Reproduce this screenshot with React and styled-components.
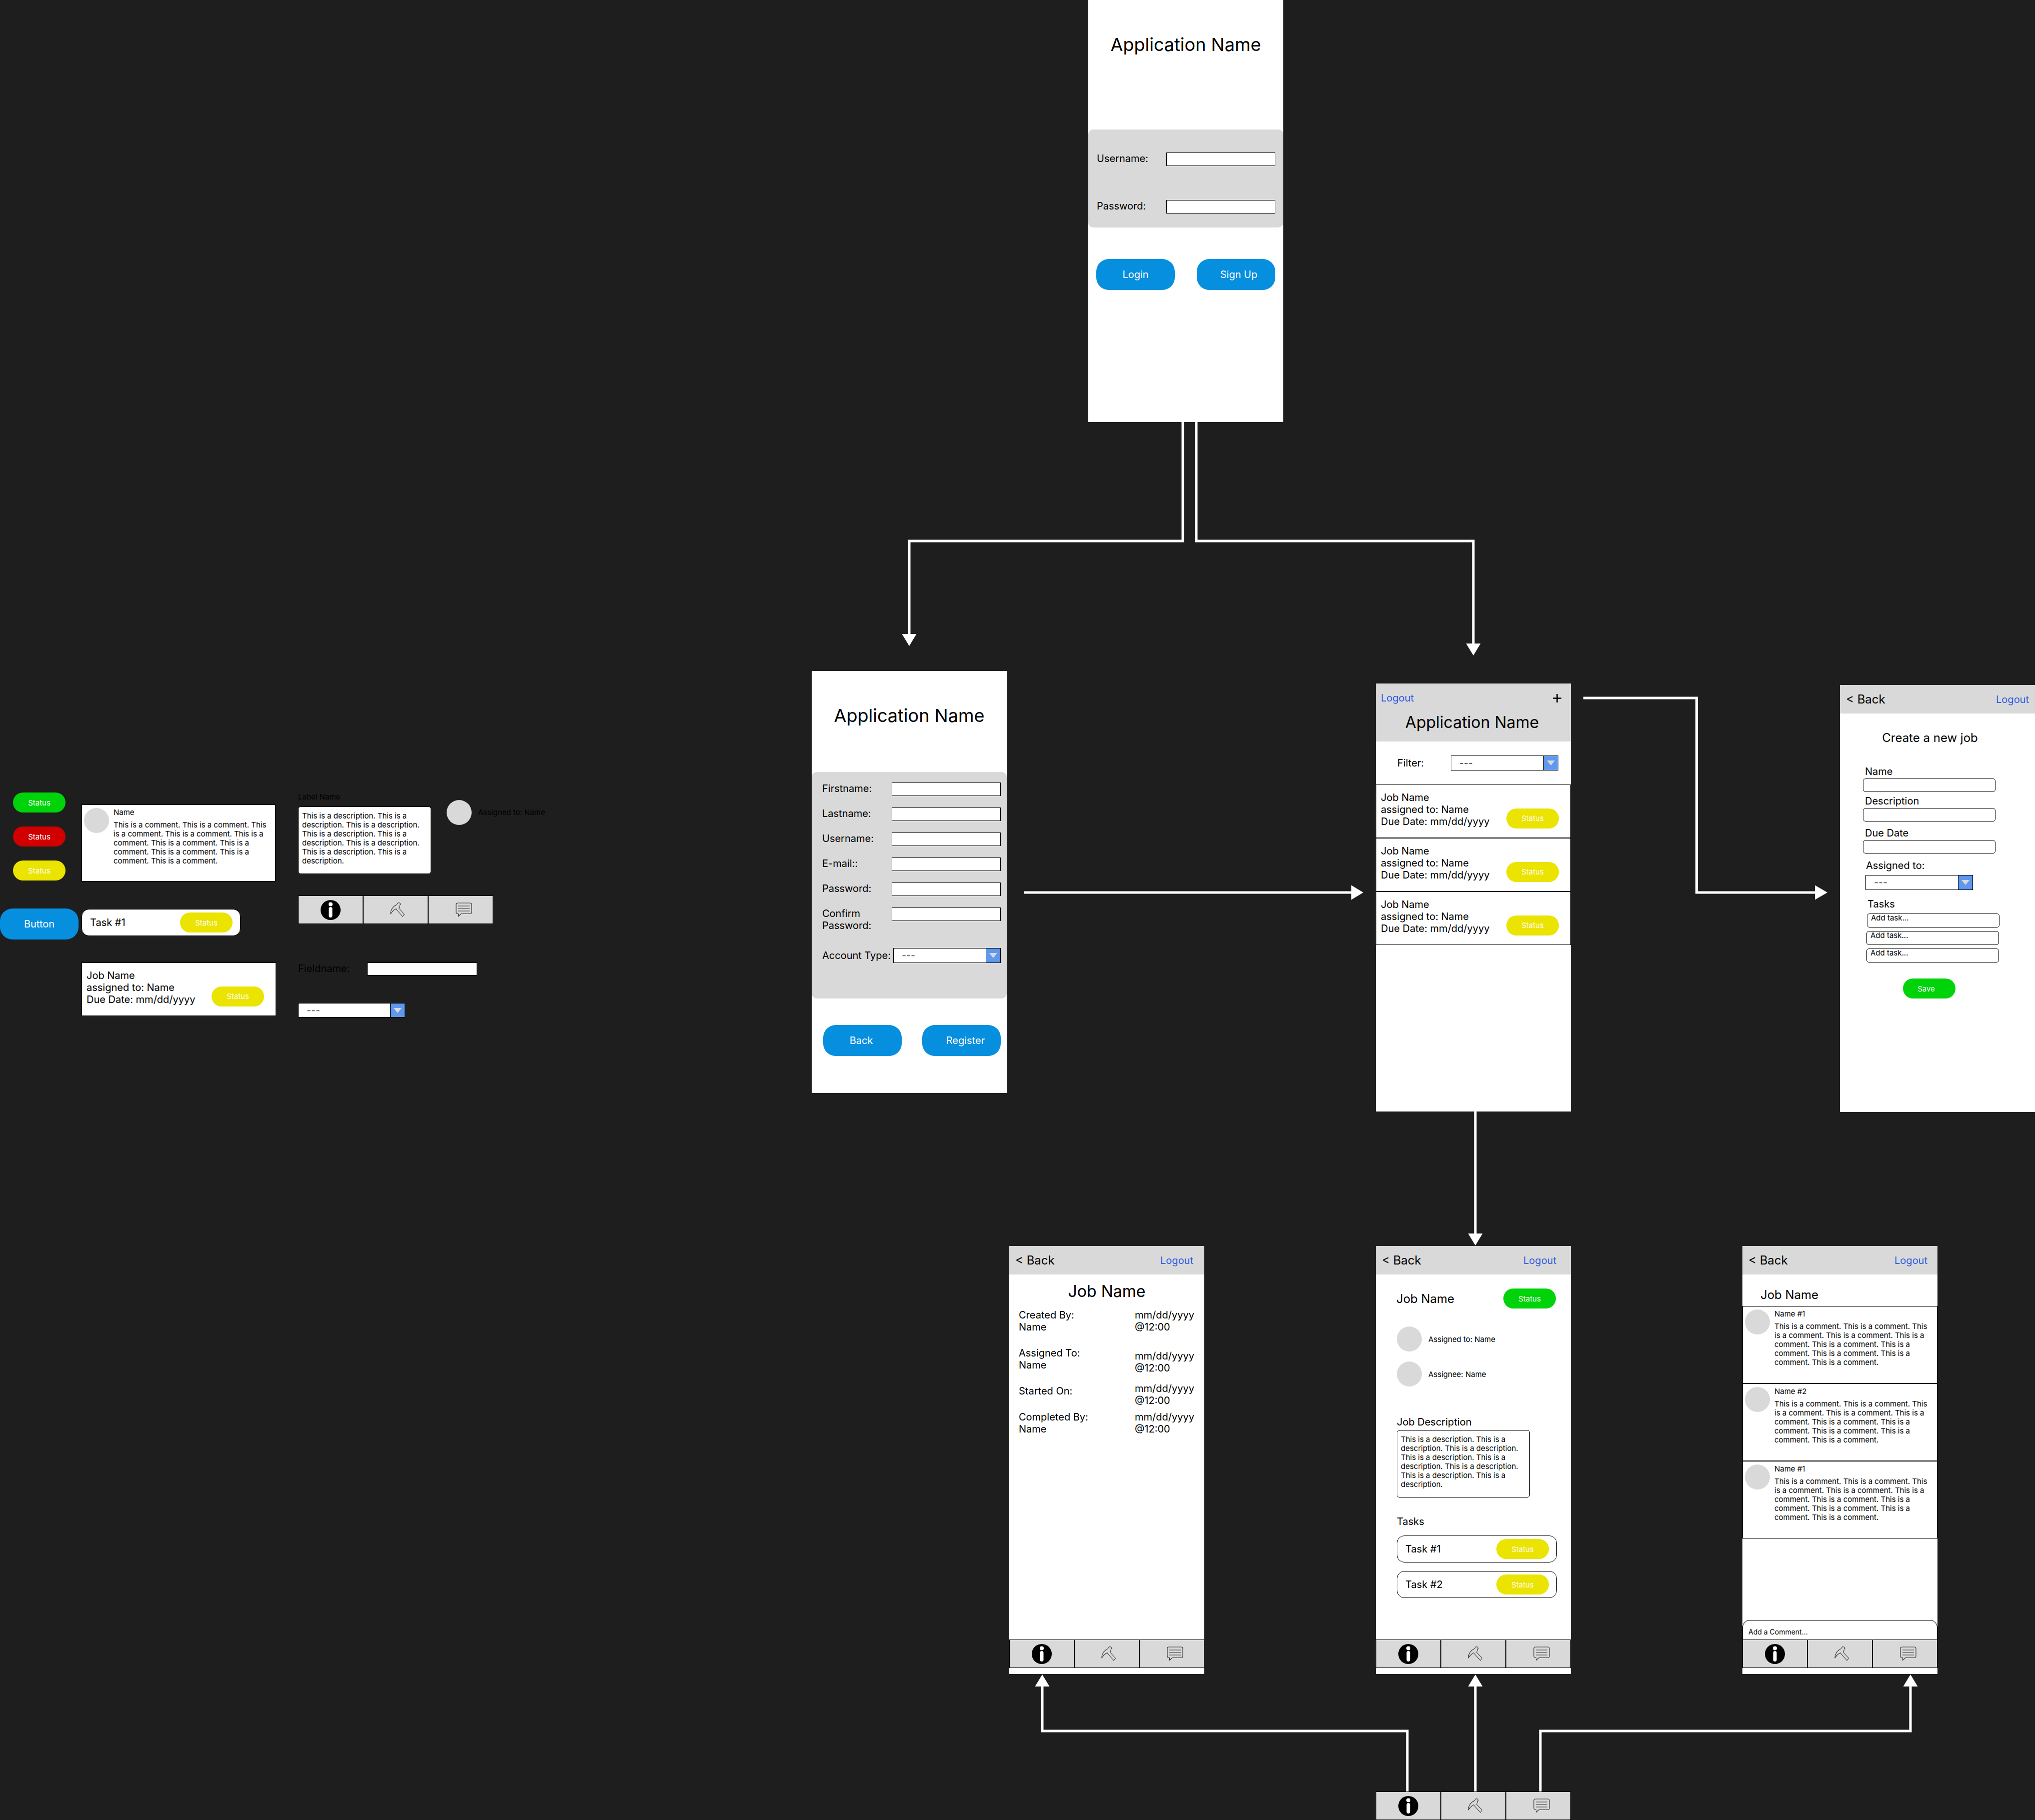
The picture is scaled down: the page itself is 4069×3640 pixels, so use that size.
import React from "react"
import styled, { createGlobalStyle } from "styled-components"

const GlobalStyle = createGlobalStyle`
  html, body {
    margin: 0;
    background: #1e1e1e;
  }
  body {
    font-family: "Inter", "Liberation Sans", sans-serif;
    color: #000;
  }
`

const GREEN = "#00d30a"
const RED = "#d00000"
const YELLOW = "#ebe300"
const BLUE = "#068fdf"
const GREY = "#d9d9d9"
const LINK = "#2d5be3"

const COMMENT =
  "This is a comment. This is a comment. This is a comment. This is a comment. This is a comment. This is a comment. This is a comment. This is a comment. This is a comment. This is a comment."
const DESCRIPTION =
  "This is a description. This is a description. This is a description. This is a description. This is a description. This is a description. This is a description. This is a description."

const Canvas = styled.div`
  position: relative;
  width: 4069px;
  height: 3640px;
  overflow: hidden;
  background: #1e1e1e;
`
const Frame = styled.section`
  position: absolute;
  left: ${(p) => p.$x}px;
  top: ${(p) => p.$y}px;
  width: 390px;
  height: ${(p) => p.$h}px;
  display: flex;
  flex-direction: column;
  background: #fff;
`
const Spot = styled.div`
  position: absolute;
  left: ${(p) => p.$x}px;
  top: ${(p) => p.$y}px;
`
const Wires = styled.svg`
  position: absolute;
  left: 0;
  top: 0;
  pointer-events: none;
`
const Spacer = styled.div`
  flex: 1;
`

/* shared parts */
const Pill = styled.div`
  flex: none;
  width: 105px;
  height: 40px;
  margin-top: ${(p) => p.$mt || 0}px;
  box-sizing: border-box;
  padding-right: ${(p) => p.$pr || 0}px;
  display: flex;
  align-items: center;
  justify-content: center;
  border-radius: 20px;
  background: ${(p) => p.$color};
  color: #fff;
  font-size: 15px;
`
const PillStack = styled.div`
  display: flex;
  flex-direction: column;
  gap: 28px;
`
const BigButton = styled.div`
  width: 157px;
  height: 62px;
  display: flex;
  align-items: center;
  justify-content: center;
  box-sizing: border-box;
  padding-left: ${(p) => p.$pad || 0}px;
  padding-right: ${(p) => p.$padR || 0}px;
  border-radius: 25px;
  background: ${BLUE};
  color: #fff;
  font-size: 20px;
`
const ButtonRow = styled.div`
  display: flex;
  justify-content: space-between;
  margin-top: ${(p) => p.$mt}px;
  padding: 0 ${(p) => p.$r}px 0 ${(p) => p.$l}px;
`
const AppTitle = styled.h1`
  margin: 0;
  height: 178px;
  display: flex;
  align-items: center;
  justify-content: center;
  font-size: 36px;
  font-weight: 400;
`
const GreyPanel = styled.div`
  height: ${(p) => p.$h}px;
  box-sizing: border-box;
  margin-top: ${(p) => p.$mt}px;
  padding: ${(p) => p.$pt}px ${(p) => p.$pr}px 0 ${(p) => p.$pl}px;
  border-radius: 10px;
  background: ${GREY};
`
const FormRow = styled.div`
  display: flex;
  justify-content: space-between;
  align-items: ${(p) => (p.$center ? "center" : "flex-start")};
  height: ${(p) => p.$h || 27}px;
  margin-top: ${(p) => p.$mt || 0}px;
  margin-bottom: ${(p) => p.$mb || 0}px;
`
const RowLabel = styled.div`
  width: 140px;
  font-size: 20px;
  line-height: 24px;
`
const Field = styled.div`
  width: 220px;
  height: ${(p) => p.$h || 27}px;
  box-sizing: border-box;
  border: 1px solid #000;
  background: #fff;
`
const Select = styled.div`
  flex: none;
  display: flex;
  width: ${(p) => p.$w || 215}px;
  height: ${(p) => p.$h || 30}px;
  margin-left: ${(p) => p.$ml || 0}px;
  box-sizing: border-box;
  border: 1px solid #000;
  background: #fff;
`
const SelectValue = styled.div`
  flex: 1;
  display: flex;
  align-items: center;
  padding-left: 16px;
  font-size: 20px;
  font-weight: 300;
`
const SelectArrow = styled.div`
  flex: none;
  width: 28px;
  display: flex;
  align-items: center;
  justify-content: center;
  border-left: 1px solid #000;
  background: #5f98ed;
  &::after {
    content: "";
    border-left: 8px solid transparent;
    border-right: 8px solid transparent;
    border-top: 10px solid ${GREY};
  }
`
const Dropdown = ({ w, h, ml }) => (
  <Select $w={w} $h={h} $ml={ml}>
    <SelectValue>---</SelectValue>
    <SelectArrow />
  </Select>
)
const TopBar = styled.header`
  flex: none;
  height: 57px;
  box-sizing: border-box;
  display: flex;
  align-items: center;
  justify-content: space-between;
  padding: 0 ${(p) => p.$r}px 0 12px;
  background: ${GREY};
`
const BackLink = styled.span`
  font-size: 24px;
`
const Logout = styled.span`
  color: ${LINK};
  font-size: 20px;
`
const Avatar = styled.div`
  flex: none;
  width: 50px;
  height: 50px;
  border-radius: 50%;
  background: ${GREY};
`
const CommentBox = styled.div`
  flex: none;
  width: ${(p) => p.$w || 390}px;
  height: ${(p) => p.$h || 155}px;
  box-sizing: border-box;
  display: flex;
  gap: 9px;
  padding: 6px 4px 0;
  border: 1px solid #000;
  background: #fff;
`
const CommentBody = styled.div`
  width: 312px;
  font-size: 15px;
  line-height: 18px;
`
const CommentText = styled.p`
  margin: 7px 0 0;
`
const Comment = ({ name, w, h }) => (
  <CommentBox $w={w} $h={h}>
    <Avatar />
    <CommentBody>
      {name}
      <CommentText>{COMMENT}</CommentText>
    </CommentBody>
  </CommentBox>
)
const DescriptionBox = styled.div`
  width: 266px;
  height: 135px;
  box-sizing: border-box;
  padding: 9px 7px 0;
  border: 1px solid #000;
  border-radius: 5px;
  background: #fff;
  font-size: 15px;
  line-height: 18px;
`
const TaskBox = styled.div`
  width: ${(p) => p.$w}px;
  height: 54px;
  box-sizing: border-box;
  display: flex;
  align-items: center;
  justify-content: space-between;
  padding: 0 15px 0 16px;
  border: 1px solid #000;
  border-radius: 15px;
  background: #fff;
  font-size: 20px;
`
const JobBox = styled.div`
  flex: none;
  width: ${(p) => p.$w || 390}px;
  height: ${(p) => p.$h || 107}px;
  box-sizing: border-box;
  display: flex;
  justify-content: space-between;
  padding: 13px 23px 0 9px;
  border: 1px solid #000;
  background: #fff;
  font-size: 20px;
  line-height: 24px;
`
const Job = ({ w, h }) => (
  <JobBox $w={w} $h={h}>
    <div>
      Job Name
      <br />
      assigned to: Name
      <br />
      Due Date: mm/dd/yyyy
    </div>
    <Pill $color={YELLOW} $mt={34}>
      Status
    </Pill>
  </JobBox>
)

/* bottom tabs */
const TabBar = styled.nav`
  flex: none;
  display: grid;
  grid-template-columns: repeat(3, 130px);
  height: 57px;
  margin-bottom: ${(p) => p.$mb || 0}px;
`
const Tab = styled.div`
  display: flex;
  align-items: center;
  justify-content: center;
  box-sizing: border-box;
  padding-left: ${(p) => p.$pad || 0}px;
  border: 1px solid #000;
  background: ${GREY};
`
const InfoIcon = () => (
  <svg width="40" height="40" viewBox="0 0 40 40">
    <circle cx="20" cy="20" r="20" fill="#000" />
    <circle cx="20" cy="8.5" r="4" fill="#fff" />
    <rect x="16.5" y="14" width="7" height="21" rx="3.5" fill="#fff" />
  </svg>
)
const HammerIcon = () => (
  <svg width="30" height="31" viewBox="0 0 30 31">
    <path
      d="M1 24 C0.5 16 6 8.5 13 5.5 L16 1.5 L19.5 2 L21 4.5 L19.5 6 L19 9 L17.5 12.5 L28.5 24.5 L25 29 L13.5 16 L12 13.5 L8.5 15.5 C5.5 17.5 3 20.5 1 24 Z"
      fill="none"
      stroke="#333"
      strokeWidth="1.1"
      strokeLinejoin="round"
    />
  </svg>
)
const ChatIcon = () => (
  <svg width="33" height="29" viewBox="0 0 33 29">
    <path
      d="M4 1 H29 Q32 1 32 4 V19 Q32 22.5 29 22.5 H11 L5.5 27.5 V22.5 H4 Q1 22.5 1 19 V4 Q1 1 4 1 Z"
      fill="none"
      stroke="#333"
      strokeWidth="1.2"
      strokeLinejoin="round"
    />
    <path d="M5 7 H28 M5 12 H28 M5 17 H28" stroke="#333" strokeWidth="1.2" />
  </svg>
)
const Tabs = ({ mb }) => (
  <TabBar $mb={mb}>
    <Tab>
      <InfoIcon />
    </Tab>
    <Tab $pad={8}>
      <HammerIcon />
    </Tab>
    <Tab $pad={12}>
      <ChatIcon />
    </Tab>
  </TabBar>
)

/* home screen */
const HomeHead = styled.header`
  flex: none;
  height: 116px;
  background: ${GREY};
`
const HomeLinks = styled.div`
  display: flex;
  justify-content: space-between;
  align-items: center;
  height: 22px;
  padding: 18px 19px 0 10px;
`
const PlusIcon = () => (
  <svg width="17" height="17" viewBox="0 0 17 17">
    <path d="M8.5 0 V17 M0 8.5 H17" stroke="#000" strokeWidth="2.5" />
  </svg>
)
const HomeTitle = styled.h1`
  margin: 18px 0 0;
  padding-right: 5px;
  font-size: 32px;
  line-height: 39px;
  font-weight: 400;
  text-align: center;
`
const FilterRow = styled.div`
  flex: none;
  height: 86px;
  display: flex;
  align-items: center;
  padding-left: 43px;
  font-size: 20px;
`
const FilterLabel = styled.span`
  width: 107px;
`

/* job details */
const DetailTitle = styled.h2`
  margin: 14px 0 16px;
  font-size: 32px;
  line-height: 39px;
  font-weight: 400;
  text-align: center;
`
const DetailRow = styled.div`
  display: grid;
  grid-template-columns: 232px 1fr;
  height: ${(p) => p.$h}px;
  padding-left: 19px;
  font-size: 20px;
  line-height: 24px;
`
const DetailCell = styled.div`
  margin-top: ${(p) => p.$mt || 0}px;
`

/* job tasks */
const JobHead = styled.div`
  display: flex;
  align-items: center;
  justify-content: space-between;
  height: 40px;
  margin-top: 28px;
  padding: 0 30px 0 41px;
  font-size: 24px;
`
const People = styled.div`
  display: flex;
  flex-direction: column;
  gap: 20px;
  margin-top: 36px;
  padding-left: 42px;
`
const Person = styled.div`
  display: flex;
  align-items: center;
  gap: 13px;
  font-size: 15px;
`
const SectionBlock = styled.div`
  margin-top: ${(p) => p.$mt}px;
  padding-left: 42px;
`
const SectionLabel = styled.div`
  margin-bottom: ${(p) => p.$mb}px;
  font-size: 20px;
  line-height: 22px;
`
const TaskList = styled.div`
  display: flex;
  flex-direction: column;
  gap: 17px;
`

/* comments */
const CommentsHead = styled.div`
  flex: none;
  height: 63px;
  box-sizing: border-box;
  padding: 26px 0 0 36px;
  font-size: 24px;
  line-height: 30px;
`
const AddComment = styled.div`
  flex: none;
  height: 39px;
  box-sizing: border-box;
  padding: 14px 0 0 11px;
  border: 1px solid #000;
  border-bottom: 0;
  border-radius: 15px 15px 0 0;
  font-size: 14px;
  line-height: 18px;
`

/* new job form */
const NewJobTitle = styled.h2`
  margin: 35px 30px 0 0;
  font-size: 24px;
  line-height: 28px;
  font-weight: 400;
  text-align: center;
`
const NewJobForm = styled.div`
  display: flex;
  flex-direction: column;
  align-items: flex-start;
  padding-left: 46px;
`
const FormLabel = styled.label`
  margin-top: ${(p) => p.$mt}px;
  margin-left: ${(p) => p.$ml}px;
  font-size: 20px;
  line-height: 22px;
`
const RoundInput = styled.div`
  width: 265px;
  height: ${(p) => p.$h || 27}px;
  margin-top: ${(p) => p.$mt}px;
  margin-left: ${(p) => p.$ml || 0}px;
  box-sizing: border-box;
  padding-left: 7px;
  border: 1px solid #000;
  border-radius: 5px;
  background: #fff;
  font-size: 15px;
  line-height: 16px;
`
const AssignedWrap = styled.div`
  margin-top: 8px;
`
const SaveWrap = styled.div`
  margin: 32px 0 0 80px;
`

/* component sheet */
const DarkText = styled.div`
  font-size: ${(p) => p.$size}px;
  line-height: 1.2;
`
const FieldSample = styled.div`
  display: flex;
  align-items: flex-start;
  gap: ${(p) => p.$gap}px;
`
const AvatarSample = styled.div`
  display: flex;
  align-items: center;
  gap: 13px;
`

const registerLabels = ["Firstname:", "Lastname:", "Username:", "E-mail::", "Password:", "Confirm Password:"]

const App = () => {
  return (
    <>
      <GlobalStyle />
      <Canvas>
        {/* component sheet */}
        <Spot $x={26} $y={1585}>
          <PillStack>
            <Pill $color={GREEN}>Status</Pill>
            <Pill $color={RED}>Status</Pill>
            <Pill $color={YELLOW}>Status</Pill>
          </PillStack>
        </Spot>
        <Spot $x={163} $y={1609}>
          <Comment name="Name" w={388} h={154} />
        </Spot>
        <Spot $x={596} $y={1585}>
          <DarkText $size={15}>Label Name</DarkText>
        </Spot>
        <Spot $x={596} $y={1613}>
          <DescriptionBox>{DESCRIPTION}</DescriptionBox>
        </Spot>
        <Spot $x={893} $y={1600}>
          <AvatarSample>
            <Avatar />
            <DarkText $size={15}>Assigned to: Name</DarkText>
          </AvatarSample>
        </Spot>
        <Spot $x={596} $y={1791}>
          <Tabs />
        </Spot>
        <Spot $x={0} $y={1817}>
          <BigButton>Button</BigButton>
        </Spot>
        <Spot $x={163} $y={1818}>
          <TaskBox $w={318}>
            Task #1
            <Pill $color={YELLOW}>Status</Pill>
          </TaskBox>
        </Spot>
        <Spot $x={163} $y={1925}>
          <Job w={389} h={107} />
        </Spot>
        <Spot $x={596} $y={1925}>
          <FieldSample $gap={35}>
            <DarkText $size={20}>Fieldname:</DarkText>
            <Field $h={26} />
          </FieldSample>
        </Spot>
        <Spot $x={596} $y={2006}>
          <Dropdown w={214} h={29} />
        </Spot>

        {/* login */}
        <Frame $x={2176} $y={0} $h={844}>
          <AppTitle>Application Name</AppTitle>
          <GreyPanel $h={196} $mt={81} $pt={46} $pl={17} $pr={16}>
            <FormRow $mb={68}>
              <RowLabel>Username:</RowLabel>
              <Field />
            </FormRow>
            <FormRow>
              <RowLabel>Password:</RowLabel>
              <Field />
            </FormRow>
          </GreyPanel>
          <ButtonRow $mt={63} $l={16} $r={16}>
            <BigButton>Login</BigButton>
            <BigButton $pad={11}>Sign Up</BigButton>
          </ButtonRow>
        </Frame>

        {/* register */}
        <Frame $x={1623} $y={1342} $h={844}>
          <AppTitle>Application Name</AppTitle>
          <GreyPanel $h={453} $mt={24} $pt={21} $pl={21} $pr={12}>
            {registerLabels.map((label) => (
              <FormRow key={label} $mb={23}>
                <RowLabel>{label}</RowLabel>
                <Field />
              </FormRow>
            ))}
            <FormRow $h={30} $mt={54} $center>
              <RowLabel>Account Type:</RowLabel>
              <Dropdown />
            </FormRow>
          </GreyPanel>
          <ButtonRow $mt={53} $l={23} $r={12}>
            <BigButton $padR={5}>Back</BigButton>
            <BigButton $pad={16}>Register</BigButton>
          </ButtonRow>
        </Frame>

        {/* home */}
        <Frame $x={2751} $y={1367} $h={856}>
          <HomeHead>
            <HomeLinks>
              <Logout>Logout</Logout>
              <PlusIcon />
            </HomeLinks>
            <HomeTitle>Application Name</HomeTitle>
          </HomeHead>
          <FilterRow>
            <FilterLabel>Filter:</FilterLabel>
            <Dropdown />
          </FilterRow>
          <Job />
          <Job />
          <Job />
        </Frame>

        {/* new job */}
        <Frame $x={3679} $y={1370} $h={854}>
          <TopBar $r={12}>
            <BackLink>&lt; Back</BackLink>
            <Logout>Logout</Logout>
          </TopBar>
          <NewJobTitle>Create a new job</NewJobTitle>
          <NewJobForm>
            <FormLabel $mt={42} $ml={4}>Name</FormLabel>
            <RoundInput $mt={3} />
            <FormLabel $mt={7} $ml={4}>Description</FormLabel>
            <RoundInput $mt={3} />
            <FormLabel $mt={12} $ml={4}>Due Date</FormLabel>
            <RoundInput $mt={3} />
            <FormLabel $mt={13} $ml={6}>Assigned to:</FormLabel>
            <AssignedWrap>
              <Dropdown ml={5} />
            </AssignedWrap>
            <FormLabel $mt={17} $ml={9}>Tasks</FormLabel>
            <RoundInput $mt={8} $ml={8} $h={28}>Add task...</RoundInput>
            <RoundInput $mt={7} $ml={7} $h={28}>Add task...</RoundInput>
            <RoundInput $mt={7} $ml={7} $h={28}>Add task...</RoundInput>
            <SaveWrap>
              <Pill $color={GREEN} $pr={12}>Save</Pill>
            </SaveWrap>
          </NewJobForm>
        </Frame>

        {/* job details */}
        <Frame $x={2018} $y={2492} $h={856}>
          <TopBar $r={22}>
            <BackLink>&lt; Back</BackLink>
            <Logout>Logout</Logout>
          </TopBar>
          <DetailTitle>Job Name</DetailTitle>
          <DetailRow $h={76}>
            <DetailCell>Created By:<br />Name</DetailCell>
            <DetailCell>mm/dd/yyyy<br />@12:00</DetailCell>
          </DetailRow>
          <DetailRow $h={71}>
            <DetailCell>Assigned To:<br />Name</DetailCell>
            <DetailCell $mt={6}>mm/dd/yyyy<br />@12:00</DetailCell>
          </DetailRow>
          <DetailRow $h={57}>
            <DetailCell $mt={5}>Started On:</DetailCell>
            <DetailCell>mm/dd/yyyy<br />@12:00</DetailCell>
          </DetailRow>
          <DetailRow $h={52}>
            <DetailCell>Completed By:<br />Name</DetailCell>
            <DetailCell>mm/dd/yyyy<br />@12:00</DetailCell>
          </DetailRow>
          <Spacer />
          <Tabs mb={12} />
        </Frame>

        {/* job tasks */}
        <Frame $x={2751} $y={2492} $h={856}>
          <TopBar $r={29}>
            <BackLink>&lt; Back</BackLink>
            <Logout>Logout</Logout>
          </TopBar>
          <JobHead>
            Job Name
            <Pill $color={GREEN}>Status</Pill>
          </JobHead>
          <People>
            <Person>
              <Avatar />
              Assigned to: Name
            </Person>
            <Person>
              <Avatar />
              Assignee: Name
            </Person>
          </People>
          <SectionBlock $mt={60}>
            <SectionLabel $mb={5}>Job Description</SectionLabel>
            <DescriptionBox>{DESCRIPTION}</DescriptionBox>
          </SectionBlock>
          <SectionBlock $mt={37}>
            <SectionLabel $mb={17}>Tasks</SectionLabel>
            <TaskList>
              <TaskBox $w={320}>
                Task #1
                <Pill $color={YELLOW}>Status</Pill>
              </TaskBox>
              <TaskBox $w={320}>
                Task #2
                <Pill $color={YELLOW}>Status</Pill>
              </TaskBox>
            </TaskList>
          </SectionBlock>
          <Spacer />
          <Tabs mb={12} />
        </Frame>

        {/* job comments */}
        <Frame $x={3484} $y={2492} $h={856}>
          <TopBar $r={20}>
            <BackLink>&lt; Back</BackLink>
            <Logout>Logout</Logout>
          </TopBar>
          <CommentsHead>Job Name</CommentsHead>
          <Comment name="Name #1" />
          <Comment name="Name #2" />
          <Comment name="Name #1" />
          <Spacer />
          <AddComment>Add a Comment...</AddComment>
          <Tabs mb={12} />
        </Frame>

        {/* tab bar that the bottom arrows start from */}
        <Spot $x={2751} $y={3583}>
          <Tabs />
        </Spot>

        <Wires width="4069" height="3640" viewBox="0 0 4069 3640">
          <g fill="none" stroke="#fff" strokeWidth="5">
            <polyline points="2365,844 2365,1082 1818,1082 1818,1270" />
            <polyline points="2392,844 2392,1082 2946,1082 2946,1290" />
            <polyline points="2048,1785 2705,1785" />
            <polyline points="3166,1396 3392.5,1396 3392.5,1785 3631,1785" />
            <polyline points="2950,2213 2950,2470" />
            <polyline points="2950,3583 2950,3370" />
            <polyline points="2814,3583 2814,3462 2084,3462 2084,3370" />
            <polyline points="3080,3583 3080,3462 3820,3462 3820,3370" />
          </g>
          <g fill="#fff">
            <polygon points="1818,1292 1803.5,1268 1832.5,1268" />
            <polygon points="2946,1311 2931.5,1287 2960.5,1287" />
            <polygon points="2726,1785 2702,1770.5 2702,1799.5" />
            <polygon points="3654,1785 3629,1770.5 3629,1799.5" />
            <polygon points="2950,2491 2935.5,2467 2964.5,2467" />
            <polygon points="2950,3349 2935.5,3373 2964.5,3373" />
            <polygon points="2084,3349 2069.5,3373 2098.5,3373" />
            <polygon points="3820,3349 3805.5,3373 3834.5,3373" />
          </g>
        </Wires>
      </Canvas>
    </>
  )
}

export default App
